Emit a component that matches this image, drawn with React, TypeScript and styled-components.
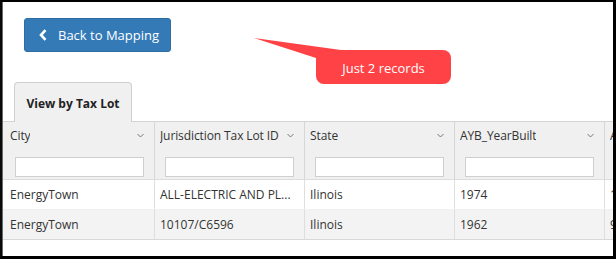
import React from "react";
import styled, { createGlobalStyle } from "styled-components";

const Global = createGlobalStyle`
  html, body { margin: 0; padding: 0; background: #000; }
  body { font-family: "Open Sans", "Liberation Sans", sans-serif; }
  * { box-sizing: border-box; }
`;

const Frame = styled.div`
  width: 616px;
  height: 259px;
  border-top: 2px solid #000;
  border-left: 2px solid #0a0a0a;
  border-right: 3px solid #000;
  border-bottom: 3px solid #000;
  background: #fff;
  overflow: hidden;
  position: relative;
`;

const Inner = styled.div`
  height: 100%;
  border-left: 1px solid #6a6a6a;
  display: flex;
  flex-direction: column;
`;

const Toolbar = styled.div`
  padding: 16px 0 0 21px;
  height: 80px;
`;

const BackButton = styled.button`
  display: inline-flex;
  align-items: center;
  gap: 11px;
  width: 147px;
  height: 34px;
  padding: 0 0 0 14px;
  border: 1px solid #2e6da4;
  border-radius: 3px;
  background: #337ab7;
  color: #fff;
  font-family: "Open Sans", "Liberation Sans", sans-serif;
  font-size: 13px;
  cursor: pointer;
`;

const TabBar = styled.div`
  display: flex;
  padding-left: 11px;
  height: 39px;
`;

const Tab = styled.div`
  width: 118px;
  height: 40px;
  border: 1px solid #cfcfcf;
  border-bottom: none;
  border-radius: 4px 4px 0 0;
  background: #f0f0f0;
  display: flex;
  align-items: center;
  justify-content: center;
  padding-top: 1px;
  font-size: 12px;
  font-weight: 700;
  color: #222;
  position: relative;
  z-index: 1;
`;

const Grid = styled.div`
  border-top: 1px solid #d4d4d4;
  display: flex;
  flex-direction: column;
  width: 760px;
`;

const HeaderRow = styled.div`
  display: flex;
  background: #f0f0f0;
  height: 58px;
  padding-left: 2px;
  border-bottom: 1px solid #dcdcdc;
`;

const HeaderCell = styled.div`
  width: 150px;
  flex: none;
  border-right: 1px solid #d6d6d6;
  padding: 5px 10px 0 5px;
  display: flex;
  flex-direction: column;
  gap: 13px;
`;

const TitleLine = styled.div`
  position: relative;
  display: flex;
  align-items: center;
  height: 17px;
  font-size: 12px;
  color: #333;
`;

const TitleText = styled.span`
  max-width: 134px;
  white-space: nowrap;
  overflow: hidden;
  text-overflow: ellipsis;
  letter-spacing: -0.1px;
`;

const ChevronBox = styled.span`
  position: absolute;
  right: 0;
  top: 6px;
  display: flex;
  background: transparent;
`;

const Filter = styled.div`
  width: 129px;
  height: 20px;
  margin-left: 5px;
  border: 1px solid #cfcfcf;
  background: #fff;
`;

const Row = styled.div<{ $alt?: boolean }>`
  display: flex;
  height: 30px;
  padding-left: 2px;
  background: ${(p) => (p.$alt ? "#f3f3f3" : "#fff")};
  border-bottom: 1px solid ${(p) => (p.$alt ? "#d8d8d8" : "#f0f0f0")};
`;

const Cell = styled.div`
  width: 150px;
  flex: none;
  border-right: 1px solid #dedede;
  padding: 0 10px 0 5px;
  display: flex;
  align-items: center;
  font-size: 12px;
  color: #333;
  white-space: nowrap;
  overflow: hidden;
`;

const Callout = styled.div`
  position: absolute;
  left: 314px;
  top: 48px;
  width: 135px;
  height: 34px;
  border-radius: 8px;
  background: #ff4246;
  color: #fff;
  font-size: 13px;
  display: flex;
  align-items: center;
  justify-content: center;
  padding-top: 1px;
`;

const Arrow = styled.svg`
  position: absolute;
  left: 0;
  top: 0;
  pointer-events: none;
`;

const Chevron = () => (
  <ChevronBox>
    <svg width="7" height="5" viewBox="0 0 7 5">
      <path d="M0.5 1 L3.5 4 L6.5 1" fill="none" stroke="#777" strokeWidth="1" />
    </svg>
  </ChevronBox>
);

const columns = ["City", "Jurisdiction Tax Lot ID", "State", "AYB_YearBuilt", "Address"];
const rows = [
  ["EnergyTown", "ALL-ELECTRIC AND PL...", "Ilinois", "1974", "1"],
  ["EnergyTown", "10107/C6596", "Ilinois", "1962", "9"],
];

export default function App() {
  return (
    <>
      <Global />
      <Frame>
        <Inner>
          <Toolbar>
            <BackButton>
              <svg width="8" height="12" viewBox="0 0 8 12">
                <path d="M6.5 1.2 L2 6 L6.5 10.8" fill="none" stroke="#fff" strokeWidth="2.6" />
              </svg>
              Back to Mapping
            </BackButton>
          </Toolbar>
          <TabBar>
            <Tab>View by Tax Lot</Tab>
          </TabBar>
          <Grid>
            <HeaderRow>
              {columns.map((c) => (
                <HeaderCell key={c}>
                  <TitleLine>
                    <TitleText>{c}</TitleText>
                    <Chevron />
                  </TitleLine>
                  <Filter />
                </HeaderCell>
              ))}
            </HeaderRow>
            {rows.map((r, i) => (
              <Row key={i} $alt={i === 1}>
                {r.map((v, j) => (
                  <Cell key={j}>{v}</Cell>
                ))}
              </Row>
            ))}
          </Grid>
        </Inner>
        <Arrow width="616" height="259">
          <polygon points="252,36 339,48 314,56" fill="#ff4246" />
        </Arrow>
        <Callout>Just 2 records</Callout>
      </Frame>
    </>
  );
}
